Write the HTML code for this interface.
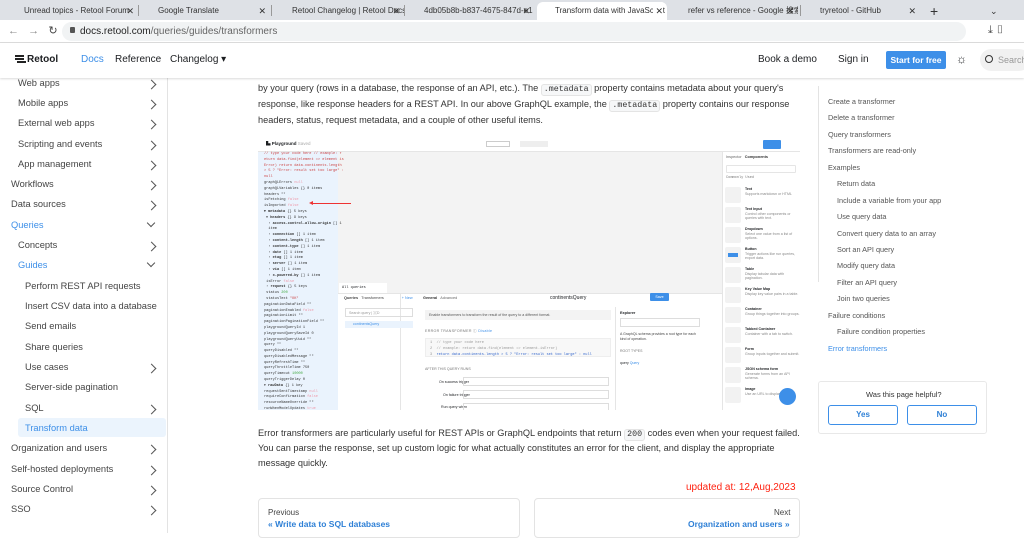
<!DOCTYPE html>
<html><head><meta charset="utf-8">
<style>
*{box-sizing:border-box;margin:0;padding:0}
body{width:1024px;height:533px;overflow:hidden;background:#fff;font-family:"Liberation Sans","Noto Sans CJK SC",sans-serif;color:#1c1e21;position:relative}
.abs{position:absolute}
.tabs{left:0;top:0;width:1024px;height:20px;background:#dee1e6}
.tab{position:absolute;top:2px;height:18px;font-size:8px;color:#333;line-height:18px;white-space:nowrap;overflow:hidden;padding-right:16px}
.tab .x{position:absolute;right:4px;top:0;font-size:9px;background:inherit;padding-left:2px}
.sep{position:absolute;top:5px;width:1px;height:11px;background:#999}
.addr{left:0;top:20px;width:1024px;height:23px;background:#fff;border-bottom:1px solid #ddd}
.url{left:62px;top:22px;width:904px;height:19px;background:#f1f3f4;border-radius:10px;font-size:10px;line-height:19px;padding-left:18px;color:#666}
.hdr{left:0;top:43px;width:1024px;height:35px;background:#fff;box-shadow:0 1px 2px rgba(0,0,0,.15);z-index:2}
.side{left:0;top:78px;width:168px;height:455px;border-right:1px solid #e3e3e3}
.si{position:absolute;font-size:9.3px;color:#444;white-space:nowrap}
.chev{position:absolute;left:148px;width:7px;height:7px;border-right:1.4px solid #555;border-top:1.4px solid #555;transform:rotate(45deg)}
.chevd{position:absolute;left:148px;width:6px;height:6px;border-right:1.4px solid #555;border-bottom:1.4px solid #555;transform:rotate(45deg)}
.p{font-size:9.2px;color:#333;line-height:16px;position:absolute;left:258px;width:545px}
code{font-family:"Liberation Mono",monospace;font-size:8.3px;background:#f6f7f8;border:1px solid #e4e4e4;border-radius:3px;padding:0 2px;line-height:10px;display:inline-block;vertical-align:baseline}
.toc{position:absolute;left:828px;font-size:7.3px;color:#555;white-space:nowrap}
.shot{left:258px;top:137px;width:542px;height:273px;background:#f3f3f3;overflow:hidden}
.t4{font-family:"Liberation Mono",monospace;font-size:3.6px;color:#333;line-height:5.8px;white-space:nowrap}
</style></head><body>
<div class="abs tabs">
 <div class="tab" style="left:8px;width:130px;padding-left:16px">Unread topics - Retool Forum<span class="x">✕</span></div><div class="sep" style="left:138px"></div>
 <div class="tab" style="left:142px;width:128px;padding-left:16px">Google Translate<span class="x">✕</span></div><div class="sep" style="left:271px"></div>
 <div class="tab" style="left:276px;width:128px;padding-left:16px">Retool Changelog | Retool Docs<span class="x">✕</span></div><div class="sep" style="left:404px"></div>
 <div class="tab" style="left:408px;width:126px;padding-left:16px">4db05b8b-b837-4675-847d-e1<span class="x">✕</span></div>
 <div class="tab" style="left:537px;width:130px;padding-left:18px;background:#fff;border-radius:6px 6px 0 0">Transform data with JavaScript |<span class="x">✕</span></div>
 <div class="tab" style="left:670px;width:128px;padding-left:18px">refer vs reference - Google 搜索<span class="x">✕</span></div><div class="sep" style="left:800px"></div>
 <div class="tab" style="left:804px;width:116px;padding-left:16px">tryretool - GitHub<span class="x">✕</span></div>
 <div class="tab" style="left:930px;font-size:14px">+</div>
 <div class="tab" style="left:990px;font-size:9px">⌄</div>
</div>
<div class="abs addr"></div>
<div class="abs" style="left:8px;top:24px;font-size:11px;color:#888">←&nbsp;&nbsp;&nbsp;→&nbsp;&nbsp;&nbsp;<span style="color:#444">↻</span></div>
<div class="abs url"><span style="color:#222">docs.retool.com</span>/queries/guides/transformers</div>
<div class="abs" style="left:70px;top:27px;width:5px;height:6px;background:#555;border-radius:1px"></div>
<div class="abs" style="left:988px;top:24px;font-size:11px;color:#444">⤓ ▯</div>
<div class="abs hdr">
 <div class="abs" style="left:15px;top:12px;width:9px;height:2px;background:#222;box-shadow:0 3px 0 #222,2px 6px 0 #222"></div>
 <div class="abs" style="left:27px;top:11px;font-size:10px;font-weight:bold">Retool</div>
 <div class="abs" style="left:81px;top:11px;font-size:10px;color:#3d8fe8">Docs</div>
 <div class="abs" style="left:115px;top:11px;font-size:10px">Reference</div>
 <div class="abs" style="left:170px;top:11px;font-size:10px">Changelog ▾</div>
 <div class="abs" style="left:758px;top:11px;font-size:10px">Book a demo</div>
 <div class="abs" style="left:838px;top:11px;font-size:10px">Sign in</div>
 <div class="abs" style="left:886px;top:8px;width:60px;height:18px;background:#3d8fe8;border-radius:2px;color:#fff;font-size:8.5px;font-weight:bold;text-align:center;line-height:18px">Start for free</div>
 <div class="abs" style="left:956px;top:9px;font-size:12px">☼</div>
 <div class="abs" style="left:980px;top:6px;width:50px;height:22px;background:#f1f1f1;border-radius:11px;font-size:9px;color:#999;line-height:22px;padding-left:18px">Search</div>
 <div class="abs" style="left:985px;top:12px;width:8px;height:8px;border:1.3px solid #333;border-radius:50%"></div>
</div>
<div class="abs side">
 <div class="si" style="left:18px;top:0">Web apps</div><div class="chev" style="top:3px"></div>
 <div class="si" style="left:18px;top:20px">Mobile apps</div><div class="chev" style="top:23px"></div>
 <div class="si" style="left:18px;top:40px">External web apps</div><div class="chev" style="top:43px"></div>
 <div class="si" style="left:18px;top:61px">Scripting and events</div><div class="chev" style="top:64px"></div>
 <div class="si" style="left:18px;top:81px">App management</div><div class="chev" style="top:84px"></div>
 <div class="si" style="left:11px;top:101px">Workflows</div><div class="chev" style="top:104px"></div>
 <div class="si" style="left:11px;top:121px">Data sources</div><div class="chev" style="top:124px"></div>
 <div class="si" style="left:11px;top:142px;color:#3d8fe8">Queries</div><div class="chevd" style="top:142px"></div>
 <div class="si" style="left:18px;top:162px">Concepts</div><div class="chev" style="top:165px"></div>
 <div class="si" style="left:18px;top:182px;color:#3d8fe8">Guides</div><div class="chevd" style="top:182px"></div>
 <div class="si" style="left:25px;top:203px">Perform REST API requests</div>
 <div class="si" style="left:25px;top:223px">Insert CSV data into a database</div>
 <div class="si" style="left:25px;top:243px">Send emails</div>
 <div class="si" style="left:25px;top:264px">Share queries</div>
 <div class="si" style="left:25px;top:284px">Use cases</div><div class="chev" style="top:287px"></div>
 <div class="si" style="left:25px;top:304px">Server-side pagination</div>
 <div class="si" style="left:25px;top:325px">SQL</div><div class="chev" style="top:328px"></div>
 <div class="abs" style="left:18px;top:340px;width:148px;height:19px;background:#ebf4fd;border-radius:3px"></div>
 <div class="si" style="left:25px;top:345px;color:#3d8fe8">Transform data</div>
 <div class="si" style="left:11px;top:365px">Organization and users</div><div class="chev" style="top:368px"></div>
 <div class="si" style="left:11px;top:386px">Self-hosted deployments</div><div class="chev" style="top:389px"></div>
 <div class="si" style="left:11px;top:406px">Source Control</div><div class="chev" style="top:409px"></div>
 <div class="si" style="left:11px;top:426px">SSO</div><div class="chev" style="top:429px"></div>
</div>

<div class="p" style="top:80px">by your query (rows in a database, the response of an API, etc.). The <code>.metadata</code> property contains metadata about your query's response, like response headers for a REST API. In our above GraphQL example, the <code>.metadata</code> property contains our response headers, status, request metadata, and a couple of other useful items.</div>

<div class="abs shot">
 <div class="abs" style="left:0;top:0;width:542px;height:15px;background:#fff;border-bottom:1px solid #e5e5e5"></div>
 <div class="abs" style="left:8px;top:4px;font-size:4.5px;font-weight:bold">▙ Playground <span style="color:#aaa;font-weight:normal">Saved</span></div>
 <div class="abs" style="left:228px;top:4px;width:24px;height:6px;border:1px solid #ccc"></div>
 <div class="abs" style="left:262px;top:4px;width:28px;height:6px;background:#eee"></div>
 <div class="abs" style="left:505px;top:3px;width:18px;height:9px;background:#3d8fe8;border-radius:1px"></div>
 <div class="abs" style="left:0;top:15px;width:80px;height:258px;background:#eaf3fd"></div>
 <div class="abs t4" style="left:6px;top:15px">
 <span style="color:#c44">// type your code here // example: r<br>eturn data.find(element =&gt; element is<br>Error) return data.continents.length<br>&gt; 5 ? "Error: result set too large" :<br>null</span><br>
 graphQLErrors <span style="color:#e9a">null</span><br>graphQLVariables {} 0 items<br>headers ""<br>isFetching <span style="color:#e9a">false</span><br>isImported <span style="color:#e9a">false</span><br><b>▾ metadata</b> {} 5 keys<br>&nbsp;▾ <b>headers</b> {} 9 keys<br>&nbsp;&nbsp;› <b>access-control-allow-origin</b> [] 1<br>&nbsp;&nbsp;item<br>&nbsp;&nbsp;› <b>connection</b> [] 1 item<br>&nbsp;&nbsp;› <b>content-length</b> [] 1 item<br>&nbsp;&nbsp;› <b>content-type</b> [] 1 item<br>&nbsp;&nbsp;› <b>date</b> [] 1 item<br>&nbsp;&nbsp;› <b>etag</b> [] 1 item<br>&nbsp;&nbsp;› <b>server</b> [] 1 item<br>&nbsp;&nbsp;› <b>via</b> [] 1 item<br>&nbsp;&nbsp;› <b>x-powered-by</b> [] 1 item<br>&nbsp;isError <span style="color:#e9a">false</span><br>&nbsp;› <b>request</b> {} 5 keys<br>&nbsp;status <span style="color:#4a4">200</span><br>&nbsp;statusText <span style="color:#c44">"OK"</span><br>paginationDataField ""<br>paginationEnabled <span style="color:#e9a">false</span><br>paginationLimit ""<br>paginationPaginationField ""<br>playgroundQueryId 1<br>playgroundQuerySaveId 0<br>playgroundQueryUuid ""<br>query ""<br>queryDisabled ""<br>queryDisabledMessage ""<br>queryRefreshTime ""<br>queryThrottleTime 750<br>queryTimeout <span style="color:#4a4">10000</span><br>queryTriggerDelay 0<br>▾ <b>rawData</b> {} 1 key<br>requestSentTimestamp <span style="color:#e9a">null</span><br>requireConfirmation <span style="color:#e9a">false</span><br>resourceNameOverride ""<br>runWhenModelUpdates <span style="color:#e9a">true</span><br>runWhenPageLoads <span style="color:#e9a">false</span>
 </div>
 <div class="abs" style="left:53px;top:66px;width:40px;height:1px;background:#e33"></div>
 <div class="abs" style="left:51px;top:64px;width:0;height:0;border-top:2.5px solid transparent;border-bottom:2.5px solid transparent;border-right:4px solid #e33"></div>
 <div class="abs" style="left:464px;top:15px;width:78px;height:258px;background:#fff;border-left:1px solid #e5e5e5"></div>
 <div class="abs" style="left:468px;top:18px;font-size:3.8px;color:#666">Inspector&nbsp;&nbsp;&nbsp;<b style="color:#333">Components</b></div>
 <div class="abs" style="left:468px;top:28px;width:70px;height:8px;border:1px solid #e5e5e5;border-radius:1px"></div>
 <div class="abs t4" style="left:468px;top:39px;color:#777">Commonly Used</div>
 <div class="abs" style="left:467px;top:50px">
  <div style="height:20px;font-size:3.6px;line-height:4.5px;padding-left:20px;position:relative"><div style="position:absolute;left:0;top:0;width:16px;height:16px;background:#f2f2f2;border-radius:2px"></div><b>Text</b><br><span style="color:#888">Supports markdown or HTML</span></div>
  <div style="height:20px;font-size:3.6px;line-height:4.5px;padding-left:20px;position:relative"><div style="position:absolute;left:0;top:0;width:16px;height:16px;background:#f2f2f2;border-radius:2px"></div><b>Text Input</b><br><span style="color:#888">Control other components or queries with text.</span></div>
  <div style="height:20px;font-size:3.6px;line-height:4.5px;padding-left:20px;position:relative"><div style="position:absolute;left:0;top:0;width:16px;height:16px;background:#f2f2f2;border-radius:2px"></div><b>Dropdown</b><br><span style="color:#888">Select one value from a list of options.</span></div>
  <div style="height:20px;font-size:3.6px;line-height:4.5px;padding-left:20px;position:relative"><div style="position:absolute;left:0;top:0;width:16px;height:16px;background:#f2f2f2;border-radius:2px"><div style="margin:6px 3px;height:4px;background:#3d8fe8"></div></div><b>Button</b><br><span style="color:#888">Trigger actions like run queries, export data.</span></div>
  <div style="height:20px;font-size:3.6px;line-height:4.5px;padding-left:20px;position:relative"><div style="position:absolute;left:0;top:0;width:16px;height:16px;background:#f2f2f2;border-radius:2px"></div><b>Table</b><br><span style="color:#888">Display tabular data with pagination.</span></div>
  <div style="height:20px;font-size:3.6px;line-height:4.5px;padding-left:20px;position:relative"><div style="position:absolute;left:0;top:0;width:16px;height:16px;background:#f2f2f2;border-radius:2px"></div><b>Key Value Map</b><br><span style="color:#888">Display key value pairs in a table.</span></div>
  <div style="height:20px;font-size:3.6px;line-height:4.5px;padding-left:20px;position:relative"><div style="position:absolute;left:0;top:0;width:16px;height:16px;background:#f2f2f2;border-radius:2px"></div><b>Container</b><br><span style="color:#888">Group things together into groups.</span></div>
  <div style="height:20px;font-size:3.6px;line-height:4.5px;padding-left:20px;position:relative"><div style="position:absolute;left:0;top:0;width:16px;height:16px;background:#f2f2f2;border-radius:2px"></div><b>Tabbed Container</b><br><span style="color:#888">Container with a tab to switch.</span></div>
  <div style="height:20px;font-size:3.6px;line-height:4.5px;padding-left:20px;position:relative"><div style="position:absolute;left:0;top:0;width:16px;height:16px;background:#f2f2f2;border-radius:2px"></div><b>Form</b><br><span style="color:#888">Group inputs together and submit.</span></div>
  <div style="height:20px;font-size:3.6px;line-height:4.5px;padding-left:20px;position:relative"><div style="position:absolute;left:0;top:0;width:16px;height:16px;background:#f2f2f2;border-radius:2px"></div><b>JSON schema form</b><br><span style="color:#888">Generate forms from an API schema.</span></div>
  <div style="height:20px;font-size:3.6px;line-height:4.5px;padding-left:20px;position:relative"><div style="position:absolute;left:0;top:0;width:16px;height:16px;background:#f2f2f2;border-radius:2px"></div><b>Image</b><br><span style="color:#888">Use an URL to display.</span></div>
 </div>
 <div class="abs" style="left:521px;top:251px;width:17px;height:17px;border-radius:50%;background:#3d8fe8"></div>
 <div class="abs" style="left:81px;top:146px;width:48px;height:10px;background:#fff;font-size:3.6px;font-family:'Liberation Mono',monospace;line-height:10px;padding-left:3px">All queries completed.</div>
 <div class="abs" style="left:80px;top:156px;width:384px;height:117px;background:#fff;border-top:1px solid #e5e5e5"></div>
 <div class="abs" style="left:142px;top:156px;width:1px;height:117px;background:#e5e5e5"></div>
 <div class="abs" style="left:357px;top:170px;width:1px;height:103px;background:#e5e5e5"></div>
 <div class="abs" style="left:86px;top:159px;font-size:3.8px;color:#444"><b>Queries</b>&nbsp;&nbsp;&nbsp;Transformers<span style="color:#3d8fe8;margin-left:18px">+ New</span></div>
 <div class="abs" style="left:87px;top:171px;width:68px;height:9px;border:1px solid #ddd;font-size:3.6px;color:#999;line-height:8px;padding-left:3px">Search query | ⌘D</div>
 <div class="abs" style="left:87px;top:184px;width:68px;height:7px;background:#eaf3fd;font-size:3.6px;color:#3d8fe8;line-height:7px;padding-left:8px">continentsQuery</div>
 <div class="abs" style="left:165px;top:159px;font-size:3.8px;color:#666"><b style="color:#333">General</b>&nbsp;&nbsp;&nbsp;Advanced</div>
 <div class="abs" style="left:292px;top:158px;font-size:5px">continentsQuery</div>
 <div class="abs" style="left:392px;top:156px;width:19px;height:8px;background:#3d8fe8;border-radius:1px;font-size:3.6px;color:#fff;text-align:center;line-height:8px">Save</div>
 <div class="abs" style="left:167px;top:173px;width:186px;height:10px;background:#f3f3f3;font-size:3.6px;color:#555;line-height:10px;padding-left:4px">Enable transformers to transform the result of the query to a different format.</div>
 <div class="abs" style="left:167px;top:192px;font-size:3.6px;color:#777;letter-spacing:.3px">ERROR TRANSFORMER ⓘ <span style="color:#3d8fe8">Disable</span></div>
 <div class="abs t4" style="left:167px;top:201px;width:186px;height:19px;background:#f8f8f8;border:1px solid #eee;padding:2px 4px;color:#999">1 &nbsp;// type your code here<br>2 &nbsp;// example: return data.find(element =&gt; element.isError)<br>3 &nbsp;<span style="color:#36c">return data.continents.length &gt; 5 ? "Error: result set too large" : null</span></div>
 <div class="abs" style="left:167px;top:230px;font-size:3.6px;color:#777">AFTER THIS QUERY RUNS</div>
 <div class="abs" style="left:181px;top:243px;font-size:3.6px">On success trigger</div><div class="abs" style="left:205px;top:240px;width:146px;height:9px;border:1px solid #ddd"></div>
 <div class="abs" style="left:185px;top:256px;font-size:3.6px">On failure trigger</div><div class="abs" style="left:205px;top:253px;width:146px;height:9px;border:1px solid #ddd"></div>
 <div class="abs" style="left:183px;top:268px;font-size:3.6px">Run query when</div><div class="abs" style="left:205px;top:266px;width:146px;height:9px;border:1px solid #ddd"></div>
 <div class="abs" style="left:362px;top:174px;font-size:3.8px"><b>Explorer</b></div>
 <div class="abs" style="left:362px;top:181px;width:80px;height:9px;border:1px solid #ddd"></div>
 <div class="abs" style="left:362px;top:195px;font-size:3.5px;width:80px;line-height:5px;color:#444">A GraphQL schema provides a root type for each kind of operation.</div>
 <div class="abs" style="left:362px;top:212px;font-size:3.5px;color:#777">ROOT TYPES</div>
 <div class="abs" style="left:362px;top:224px;font-size:3.5px">query <span style="color:#3d8fe8">Query</span></div>
</div>

<div class="p" style="top:426px;line-height:15px">Error transformers are particularly useful for REST APIs or GraphQL endpoints that return <code>200</code> codes even when your request failed. You can parse the response, set up custom logic for what actually constitutes an error for the client, and display the appropriate message quickly.</div>
<div class="abs" style="left:686px;top:482px;font-size:10px;color:#f21">updated at: 12,Aug,2023</div>
<div class="abs" style="left:258px;top:498px;width:262px;height:40px;border:1px solid #e3e3e3;border-radius:4px"></div>
<div class="abs" style="left:268px;top:508px;font-size:8px;color:#444">Previous</div>
<div class="abs" style="left:268px;top:519px;font-size:8.5px;color:#2f80d6;font-weight:bold">« Write data to SQL databases</div>
<div class="abs" style="left:534px;top:498px;width:266px;height:40px;border:1px solid #e3e3e3;border-radius:4px"></div>
<div class="abs" style="left:774px;top:508px;font-size:8px;color:#444">Next</div>
<div class="abs" style="left:688px;top:519px;font-size:8.5px;color:#2f80d6;font-weight:bold">Organization and users »</div>

<div class="abs" style="left:818px;top:86px;width:1px;height:196px;background:#e3e3e3"></div>
<div class="toc" style="top:97px">Create a transformer</div>
<div class="toc" style="top:113px">Delete a transformer</div>
<div class="toc" style="top:130px">Query transformers</div>
<div class="toc" style="top:146px">Transformers are read-only</div>
<div class="toc" style="top:163px">Examples</div>
<div class="toc" style="top:179px;left:837px">Return data</div>
<div class="toc" style="top:196px;left:837px">Include a variable from your app</div>
<div class="toc" style="top:212px;left:837px">Use query data</div>
<div class="toc" style="top:229px;left:837px">Convert query data to an array</div>
<div class="toc" style="top:245px;left:837px">Sort an API query</div>
<div class="toc" style="top:261px;left:837px">Modify query data</div>
<div class="toc" style="top:278px;left:837px">Filter an API query</div>
<div class="toc" style="top:294px;left:837px">Join two queries</div>
<div class="toc" style="top:311px">Failure conditions</div>
<div class="toc" style="top:327px;left:837px">Failure condition properties</div>
<div class="toc" style="top:344px;color:#3d8fe8">Error transformers</div>
<div class="abs" style="left:818px;top:381px;width:169px;height:53px;border:1px solid #e8e8e8;border-radius:3px"></div>
<div class="abs" style="left:866px;top:390px;font-size:7.5px;color:#333">Was this page helpful?</div>
<div class="abs" style="left:828px;top:405px;width:70px;height:20px;border:1px solid #3d8fe8;border-radius:3px;font-size:8px;color:#2f80d6;font-weight:bold;text-align:center;line-height:18px">Yes</div>
<div class="abs" style="left:907px;top:405px;width:70px;height:20px;border:1px solid #3d8fe8;border-radius:3px;font-size:8px;color:#2f80d6;font-weight:bold;text-align:center;line-height:18px">No</div>
</body></html>
